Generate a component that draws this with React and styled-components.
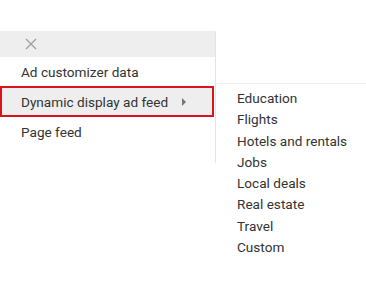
import React from 'react'
import styled, { createGlobalStyle } from 'styled-components'

const GlobalStyle = createGlobalStyle`
  html, body {
    margin: 0;
    padding: 0;
    background: #fff;
  }
  body {
    font-family: Roboto, "Liberation Sans", Arial, sans-serif;
    color: #333;
  }
`;

const Page = styled.div`
  width: 366px;
  height: 284px;
  padding-top: 31px;
  box-sizing: border-box;
  overflow: hidden;
`;

const Menu = styled.div`
  position: relative;
  width: 216px;
  box-sizing: border-box;
  border-right: 1px solid #e4e4e4;
  padding-bottom: 16px;
`;

const Header = styled.div`
  height: 26px;
  background: #eeeeee;
  display: flex;
  align-items: center;
  padding-left: 25px;
`;

const CloseButton = styled.button`
  border: 0;
  padding: 0;
  background: none;
  width: 12px;
  height: 12px;
  display: flex;
  cursor: pointer;
`;

const Item = styled.div`
  height: ${({ $h }) => $h || 30}px;
  box-sizing: border-box;
  display: flex;
  align-items: center;
  padding-left: ${({ $active }) => ($active ? 19 : 21)}px;
  padding-right: 26px;
  font-size: 13.6px;
  color: #333;
  background: ${({ $active }) => ($active ? '#eeeeee' : 'transparent')};
  border: ${({ $active }) => ($active ? '2px solid #d9141c' : '0')};
  margin-right: ${({ $active }) => ($active ? '1px' : '0')};
  justify-content: space-between;
  cursor: pointer;
`;

const Caret = styled.span`
  width: 0;
  height: 0;
  border-top: 4px solid transparent;
  border-bottom: 4px solid transparent;
  border-left: 4px solid #777;
`;

const Submenu = styled.ul`
  position: absolute;
  left: 216px;
  top: 52px;
  width: 150px;
  margin: 0;
  padding: 4px 0 8px;
  list-style: none;
  background: #fff;
  border-top: 1px solid #f0f0f0;
`;

const SubItem = styled.li`
  padding-left: 21px;
  line-height: 21.3px;
  font-size: 13.6px;
  color: #333;
  cursor: pointer;
`;

const subItems = [
  'Education',
  'Flights',
  'Hotels and rentals',
  'Jobs',
  'Local deals',
  'Real estate',
  'Travel',
  'Custom',
];

function App() {
  return (
    <Page>
      <GlobalStyle />
      <Menu>
        <Header>
          <CloseButton aria-label="Close">
            <svg width="12" height="12" viewBox="0 0 12 12">
              <path d="M1 1 L11 11 M11 1 L1 11" stroke="#9e9e9e" strokeWidth="1.3" fill="none" />
            </svg>
          </CloseButton>
        </Header>
        <Item $h={29}>Ad customizer data</Item>
        <Item $h={31} $active>
          Dynamic display ad feed
          <Caret />
        </Item>
        <Item $h={30}>Page feed</Item>
        <Submenu>
          {subItems.map((s) => (
            <SubItem key={s}>{s}</SubItem>
          ))}
        </Submenu>
      </Menu>
    </Page>
  )
}

export default App
